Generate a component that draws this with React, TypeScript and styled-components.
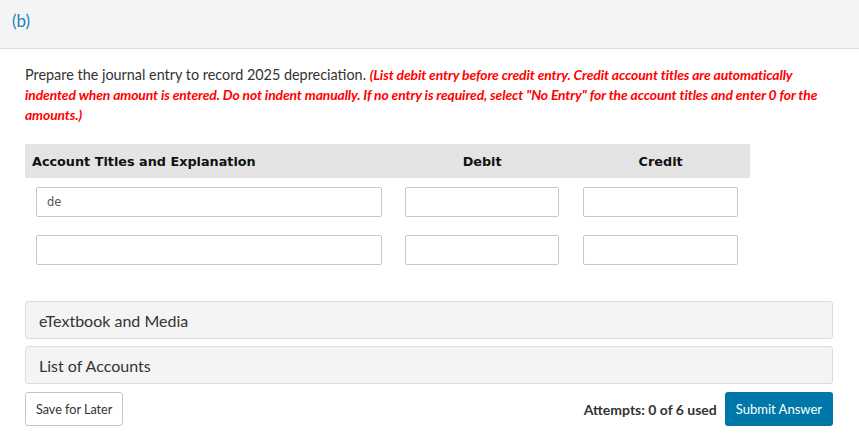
import React, { useState } from 'react';
import styled, { createGlobalStyle } from 'styled-components';

const GlobalStyle = createGlobalStyle`
  html, body {
    margin: 0;
    padding: 0;
    background: #fff;
  }
  body {
    font-family: Lato, "Open Sans", Arial, sans-serif;
    color: #333;
  }
  * {
    box-sizing: border-box;
  }
`;

const rows = [
  { account: 'de', debit: '', credit: '' },
  { account: '', debit: '', credit: '' },
];

const App = () => {
  const [entries, setEntries] = useState(rows);

  const update = (i: number, key: 'account' | 'debit' | 'credit', value: string) => {
    setEntries(prev => prev.map((r, idx) => (idx === i ? { ...r, [key]: value } : r)));
  };

  return (
    <Page>
      <GlobalStyle />
      <PartHeader>
        <PartLabel>(b)</PartLabel>
      </PartHeader>

      <Body>
        <Question>
          Prepare the journal entry to record 2025 depreciation.{' '}
          <Instructions>
            (List debit entry before credit entry. Credit account titles are automatically
            indented when amount is entered. Do not indent manually. If no entry is required,
            select "No Entry" for the account titles and enter 0 for the amounts.)
          </Instructions>
        </Question>

        <JournalTable>
          <thead>
            <tr>
              <HeadCell align="left">Account Titles and Explanation</HeadCell>
              <HeadCell align="center">Debit</HeadCell>
              <HeadCell align="center">Credit</HeadCell>
            </tr>
          </thead>
          <tbody>
            {entries.map((r, i) => (
              <tr key={i}>
                <Cell $wide>
                  <EntryInput value={r.account} onChange={e => update(i, 'account', e.target.value)} />
                </Cell>
                <Cell>
                  <EntryInput value={r.debit} onChange={e => update(i, 'debit', e.target.value)} />
                </Cell>
                <Cell>
                  <EntryInput value={r.credit} onChange={e => update(i, 'credit', e.target.value)} />
                </Cell>
              </tr>
            ))}
          </tbody>
        </JournalTable>

        <Panels>
          <Panel>eTextbook and Media</Panel>
          <Panel>List of Accounts</Panel>
        </Panels>

        <Footer>
          <SecondaryButton>Save for Later</SecondaryButton>
          <FooterRight>
            <Attempts>Attempts: 0 of 6 used</Attempts>
            <PrimaryButton>Submit Answer</PrimaryButton>
          </FooterRight>
        </Footer>
      </Body>
    </Page>
  );
};

const Page = styled.div`
  width: 859px;
  min-height: 439px;
  background: #fff;
`;

const PartHeader = styled.div`
  height: 49px;
  background: #f4f4f4;
  border-bottom: 1px solid #dcdcdc;
  padding: 10px 12px 0;
`;

const PartLabel = styled.span`
  font-size: 17px;
  line-height: 22px;
  color: #1a82c2;
`;

const Body = styled.div`
  padding: 16px 26px 0 25px;
`;

const Question = styled.p`
  margin: 0;
  font-size: 14.4px;
  line-height: 20px;
  color: #333;
`;

const Instructions = styled.span`
  color: #f00;
  font-size: 13.9px;
  font-weight: bold;
  font-style: italic;
  letter-spacing: -0.12px;
`;

const JournalTable = styled.table`
  width: 725px;
  border-collapse: collapse;
  margin-top: 19px;
`;

const HeadCell = styled.th<{ align: 'left' | 'center' }>`
  background: #e4e4e4;
  height: 34px;
  padding: 0 7px;
  text-align: ${p => p.align};
  font-family: "DejaVu Sans", Verdana, sans-serif;
  font-size: 12.8px;
  font-weight: bold;
  color: #111;
  &:first-child {
    width: 368px;
  }
`;

const Cell = styled.td<{ $wide?: boolean }>`
  height: 48px;
  padding: 9px ${p => (p.$wide ? '11px' : '12px')};
`;

const EntryInput = styled.input`
  display: block;
  width: 100%;
  height: 30px;
  border: 1px solid #c8c8c8;
  border-radius: 2px;
  padding: 0 10px;
  font-family: "DejaVu Sans", Verdana, sans-serif;
  font-size: 11.5px;
  color: #555;
  outline: none;
`;

const Panels = styled.div`
  margin-top: 27px;
  display: flex;
  flex-direction: column;
  gap: 7px;
`;

const Panel = styled.div`
  height: 38px;
  background: #f4f4f4;
  border: 1px solid #dcdcdc;
  border-radius: 3px;
  padding: 0 13px;
  display: flex;
  align-items: center;
  font-size: 16px;
  color: #333;
`;

const Footer = styled.div`
  margin-top: 8px;
  display: flex;
  align-items: center;
  justify-content: space-between;
`;

const FooterRight = styled.div`
  display: flex;
  align-items: center;
  gap: 8px;
`;

const Attempts = styled.span`
  font-size: 14px;
  font-weight: bold;
  color: #333;
`;

const SecondaryButton = styled.button`
  height: 34px;
  padding: 0 10px;
  background: #fff;
  border: 1px solid #c4c4c4;
  border-radius: 3px;
  font-family: Lato, Arial, sans-serif;
  font-size: 12.6px;
  color: #333;
  cursor: pointer;
`;

const PrimaryButton = styled.button`
  height: 34px;
  padding: 0 11px;
  background: #0077a9;
  border: none;
  border-radius: 3px;
  font-family: Lato, Arial, sans-serif;
  font-size: 13px;
  color: #fff;
  cursor: pointer;
`;

export default App;
